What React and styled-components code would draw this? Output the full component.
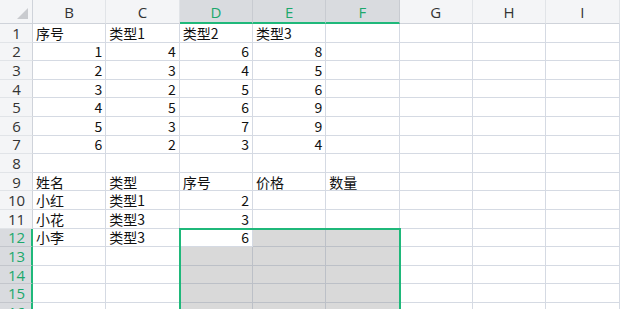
import styled, { createGlobalStyle } from "styled-components"

const COL_W = 73.33
const ROW_H = 18.6
const HEAD_H = 24
const ROWHEAD_W = 33
const GREEN = "#1fb87a"

const columns = ["B", "C", "D", "E", "F", "G", "H", "I"]
const selectedCols = ["D", "E", "F"]

// sheet contents, keyed by row number, values for B..E
const data = {
  1: ["序号", "类型1", "类型2", "类型3"],
  2: [1, 4, 6, 8],
  3: [2, 3, 4, 5],
  4: [3, 2, 5, 6],
  5: [4, 5, 6, 9],
  6: [5, 3, 7, 9],
  7: [6, 2, 3, 4],
  9: ["姓名", "类型", "序号", "价格", "数量"],
  10: ["小红", "类型1", 2],
  11: ["小花", "类型3", 3],
  12: ["小李", "类型3", 6],
}

const GlobalStyle = createGlobalStyle`
  body {
    margin: 0;
    background: #fff;
    overflow: hidden;
  }
`

const Sheet = styled.div`
  position: relative;
  display: grid;
  grid-template-columns: ${ROWHEAD_W}px repeat(${columns.length}, ${COL_W}px);
  grid-template-rows: ${HEAD_H}px repeat(16, ${ROW_H}px);
  width: 620px;
  height: 309px;
  overflow: hidden;
  font-family: "Noto Sans CJK SC", "Noto Sans", sans-serif;
`

const Corner = styled.div`
  position: relative;
  background: #f4f5f7;
  border-right: 1px solid #cfd3da;
  border-bottom: 1px solid #cfd3da;
  box-sizing: border-box;

  &::after {
    content: "";
    position: absolute;
    right: 4px;
    bottom: 4px;
    border-style: solid;
    border-width: 0 0 11px 11px;
    border-color: transparent transparent #c9cbcf transparent;
  }
`

const ColHead = styled.div`
  display: flex;
  align-items: center;
  justify-content: center;
  box-sizing: border-box;
  background: ${(p) => (p.$sel ? "#d9dbdf" : "#f4f5f7")};
  border-right: 1px solid ${(p) => (p.$sel ? "#c8cbd1" : "#e1e4e8")};
  border-bottom: ${(p) => (p.$sel ? `2px solid ${GREEN}` : "1px solid #cfd3da")};
  color: ${(p) => (p.$sel ? "#1ca86c" : "#333")};
  font-family: "Open Sans", "Noto Sans", sans-serif;
  font-size: 15px;
  padding-top: ${(p) => (p.$sel ? 1 : 0)}px;
`

const RowHead = styled.div`
  display: flex;
  align-items: center;
  justify-content: center;
  box-sizing: border-box;
  background: ${(p) => (p.$sel ? "#d9dbdf" : "#f4f5f7")};
  border-right: ${(p) => (p.$sel ? `2px solid ${GREEN}` : "1px solid #cfd3da")};
  border-bottom: 1px solid ${(p) => (p.$sel ? "#c3c6cc" : "#e1e4e8")};
  color: ${(p) => (p.$sel ? "#1ca86c" : "#333")};
  font-family: "Open Sans", "Noto Sans", sans-serif;
  font-size: 15px;
  padding-left: ${(p) => (p.$sel ? 2 : 1)}px;
`

const Cell = styled.div`
  display: flex;
  align-items: center;
  justify-content: ${(p) => (p.$num ? "flex-end" : "flex-start")};
  box-sizing: border-box;
  padding: 0 3px 0 3px;
  background: ${(p) => (p.$shade ? "#d9d9d9" : "#fff")};
  border-right: 1px solid ${(p) => (p.$shade ? "#bcc0c7" : "#d5dae3")};
  border-bottom: 1px solid ${(p) => (p.$shade ? "#bcc0c7" : "#d5dae3")};
  color: #111;
  font-size: 14px;
  white-space: nowrap;
  overflow: hidden;
`

const Selection = styled.div`
  position: absolute;
  left: ${ROWHEAD_W + 2 * COL_W - 1}px;
  top: ${HEAD_H + 11 * ROW_H - 1}px;
  width: ${3 * COL_W + 2}px;
  height: 200px;
  box-sizing: border-box;
  border: 2px solid ${GREEN};
  pointer-events: none;
`

const isSelected = (col, row) => selectedCols.includes(col) && row >= 12

export default function App() {
  const rows = Array.from({ length: 16 }, (_, i) => i + 1)

  return (
    <>
      <GlobalStyle />
      <Sheet>
        <Corner />
        {columns.map((c) => (
          <ColHead key={c} $sel={selectedCols.includes(c)}>
            {c}
          </ColHead>
        ))}
        {rows.map((r) => (
          <Row key={r} row={r} />
        ))}
        <Selection />
      </Sheet>
    </>
  )
}

function Row({ row }) {
  const values = data[row] || []
  return (
    <>
      <RowHead $sel={row >= 12}>{row}</RowHead>
      {columns.map((c, i) => {
        const v = values[i]
        const active = c === "D" && row === 12
        return (
          <Cell key={c} $num={typeof v === "number"} $shade={isSelected(c, row) && !active}>
            {v}
          </Cell>
        )
      })}
    </>
  )
}
